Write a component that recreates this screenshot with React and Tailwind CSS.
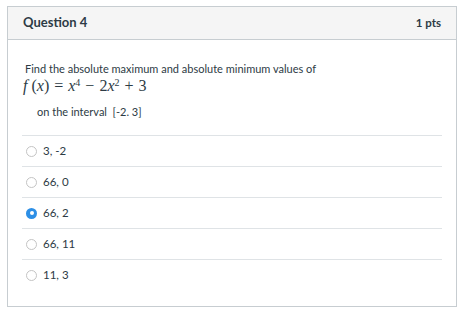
export default function App() {
  const answers = [
    { label: '3, -2', checked: false },
    { label: '66, 0', checked: false },
    { label: '66, 2', checked: true },
    { label: '66, 11', checked: false },
    { label: '11, 3', checked: false },
  ];

  return (
    <div className="w-[474px] h-[316px] bg-white pt-[6px] pl-[7px] font-['Lato','Open_Sans',sans-serif] text-[#2d3b45]">
      <div className="w-[450px] h-[301px] border border-[#c7cdd1] flex flex-col">
        <div className="h-[33px] bg-[#f5f5f5] border-b border-[#c7cdd1] flex items-center justify-between pl-[15px] pr-[15px]">
          <span className="text-[13px] font-bold">Question 4</span>
          <span className="text-[11.5px] font-bold">1 pts</span>
        </div>
        <div className="px-[14px] pt-[22px]">
          <p className="text-[11px] leading-[14px] pl-[3px]">Find the absolute maximum and absolute minimum values of</p>
          <p className="font-['Liberation_Serif','DejaVu_Serif',serif] text-[16px] leading-[20px] pl-[1px] flex items-baseline">
            <i>f</i>
            <span className="ml-[4px]">(</span>
            <i>x</i>
            <span>)</span>
            <span className="mx-[5px]">=</span>
            <i>x</i>
            <sup className="text-[10px]">4</sup>
            <span className="mx-[5px]">−</span>
            <span>2</span>
            <i>x</i>
            <sup className="text-[10px]">2</sup>
            <span className="mx-[5px]">+</span>
            <span>3</span>
          </p>
          <p className="text-[11px] leading-[14px] pl-[15px] mt-[9px]">on the interval&nbsp; [-2. 3]</p>
          <div className="mt-[16px]">
            {answers.map((a) => (
              <div key={a.label} className="h-[31px] border-t border-[#dfe3e6] flex items-center gap-[6px] pl-[4px]">
                {a.checked ? (
                  <span className="w-[11px] h-[11px] rounded-full bg-[#2d8fe6] flex items-center justify-center">
                    <span className="w-[4px] h-[4px] rounded-full bg-white" />
                  </span>
                ) : (
                  <span className="w-[11px] h-[11px] rounded-full border border-[#c4c4c4] bg-white" />
                )}
                <span className="text-[11.5px]">{a.label}</span>
              </div>
            ))}
          </div>
        </div>
      </div>
    </div>
  );
}
